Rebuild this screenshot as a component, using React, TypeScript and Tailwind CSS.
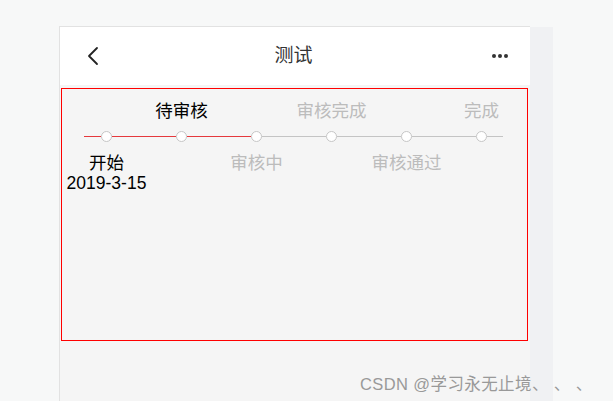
import React from "react";

const steps = [
  { top: "", bottom: "开始", date: "2019-3-15", active: true },
  { top: "待审核", bottom: "", date: "", active: true },
  { top: "", bottom: "审核中", date: "", active: false },
  { top: "审核完成", bottom: "", date: "", active: false },
  { top: "", bottom: "审核通过", date: "", active: false },
  { top: "完成", bottom: "", date: "", active: false },
];

const RED = "bg-[#e5393d]";
const GRAY = "bg-[#c4c4c4]";

function Step({ step, i }: { step: (typeof steps)[number]; i: number }) {
  const leftRed = i <= 2;
  const rightRed = i < 2;
  const first = i === 0;
  const last = i === steps.length - 1;
  return (
    <div className="w-[75px] flex flex-col items-center">
      <div className={`h-[20px] leading-[20px] whitespace-nowrap ${i === 1 ? "text-black" : "text-[#bcbcbc]"}`}>{step.top}</div>
      <div className="mt-[10px] h-[11px] w-full flex items-center">
        <div className="flex-1 flex justify-end">
          <div className={`h-px ${leftRed ? RED : GRAY} ${first ? "w-[17px]" : "w-full"}`} />
        </div>
        <div className="w-[11px] h-[11px] rounded-full border border-[#c6c6c6] bg-white shrink-0" />
        <div className="flex-1 flex justify-start">
          <div className={`h-px ${rightRed ? RED : GRAY} ${last ? "w-[16px]" : "w-full"}`} />
        </div>
      </div>
      <div className={`mt-[11px] h-[20px] leading-[20px] whitespace-nowrap ${i === 0 ? "text-black" : "text-[#bcbcbc]"}`}>{step.bottom}</div>
      {step.date && <div className="leading-[21px] whitespace-nowrap text-black">{step.date}</div>}
    </div>
  );
}

export default function App() {
  return (
    <div className="relative h-[401px] w-[613px] overflow-hidden bg-[#f7f8f8] pt-[26px] pl-[59px] font-['Liberation_Sans','Noto_Sans_CJK_SC',sans-serif]">
      <div className="flex h-full">
        <div className="w-[471px] h-full flex flex-col border-l border-t border-[#e2e2e2] bg-[#f5f5f5]">
          <div className="h-[58px] bg-white flex items-center justify-between pl-[27px] pr-[22px] shrink-0">
            <svg width="12" height="20" viewBox="0 0 12 20" fill="none">
              <path d="M10 2 L2 10 L10 18" stroke="#222" strokeWidth="1.8" strokeLinecap="round" strokeLinejoin="round" />
            </svg>
            <div className="text-[19px] text-[#333] -ml-[4px]">测试</div>
            <div className="flex gap-[2px] items-center">
              <span className="w-[4px] h-[4px] rounded-full bg-[#333]" />
              <span className="w-[4px] h-[4px] rounded-full bg-[#333]" />
              <span className="w-[4px] h-[4px] rounded-full bg-[#333]" />
            </div>
          </div>
          <div className="mt-[3px] ml-[1px] w-[467px] h-[253px] border border-[#ff0000] text-[17.5px]">
            <div className="flex pl-[7px] pt-[12px]">
              {steps.map((s, i) => (
                <Step key={i} step={s} i={i} />
              ))}
            </div>
          </div>
        </div>
        <div className="w-[23px] h-full mt-[1px] bg-[#f0f1f3]" />
      </div>
      <div className="absolute left-[360px] top-[372px] text-[16.5px] tracking-[0.4px] text-[#999] whitespace-nowrap">CSDN @学习永无止境、 、 、</div>
    </div>
  );
}
